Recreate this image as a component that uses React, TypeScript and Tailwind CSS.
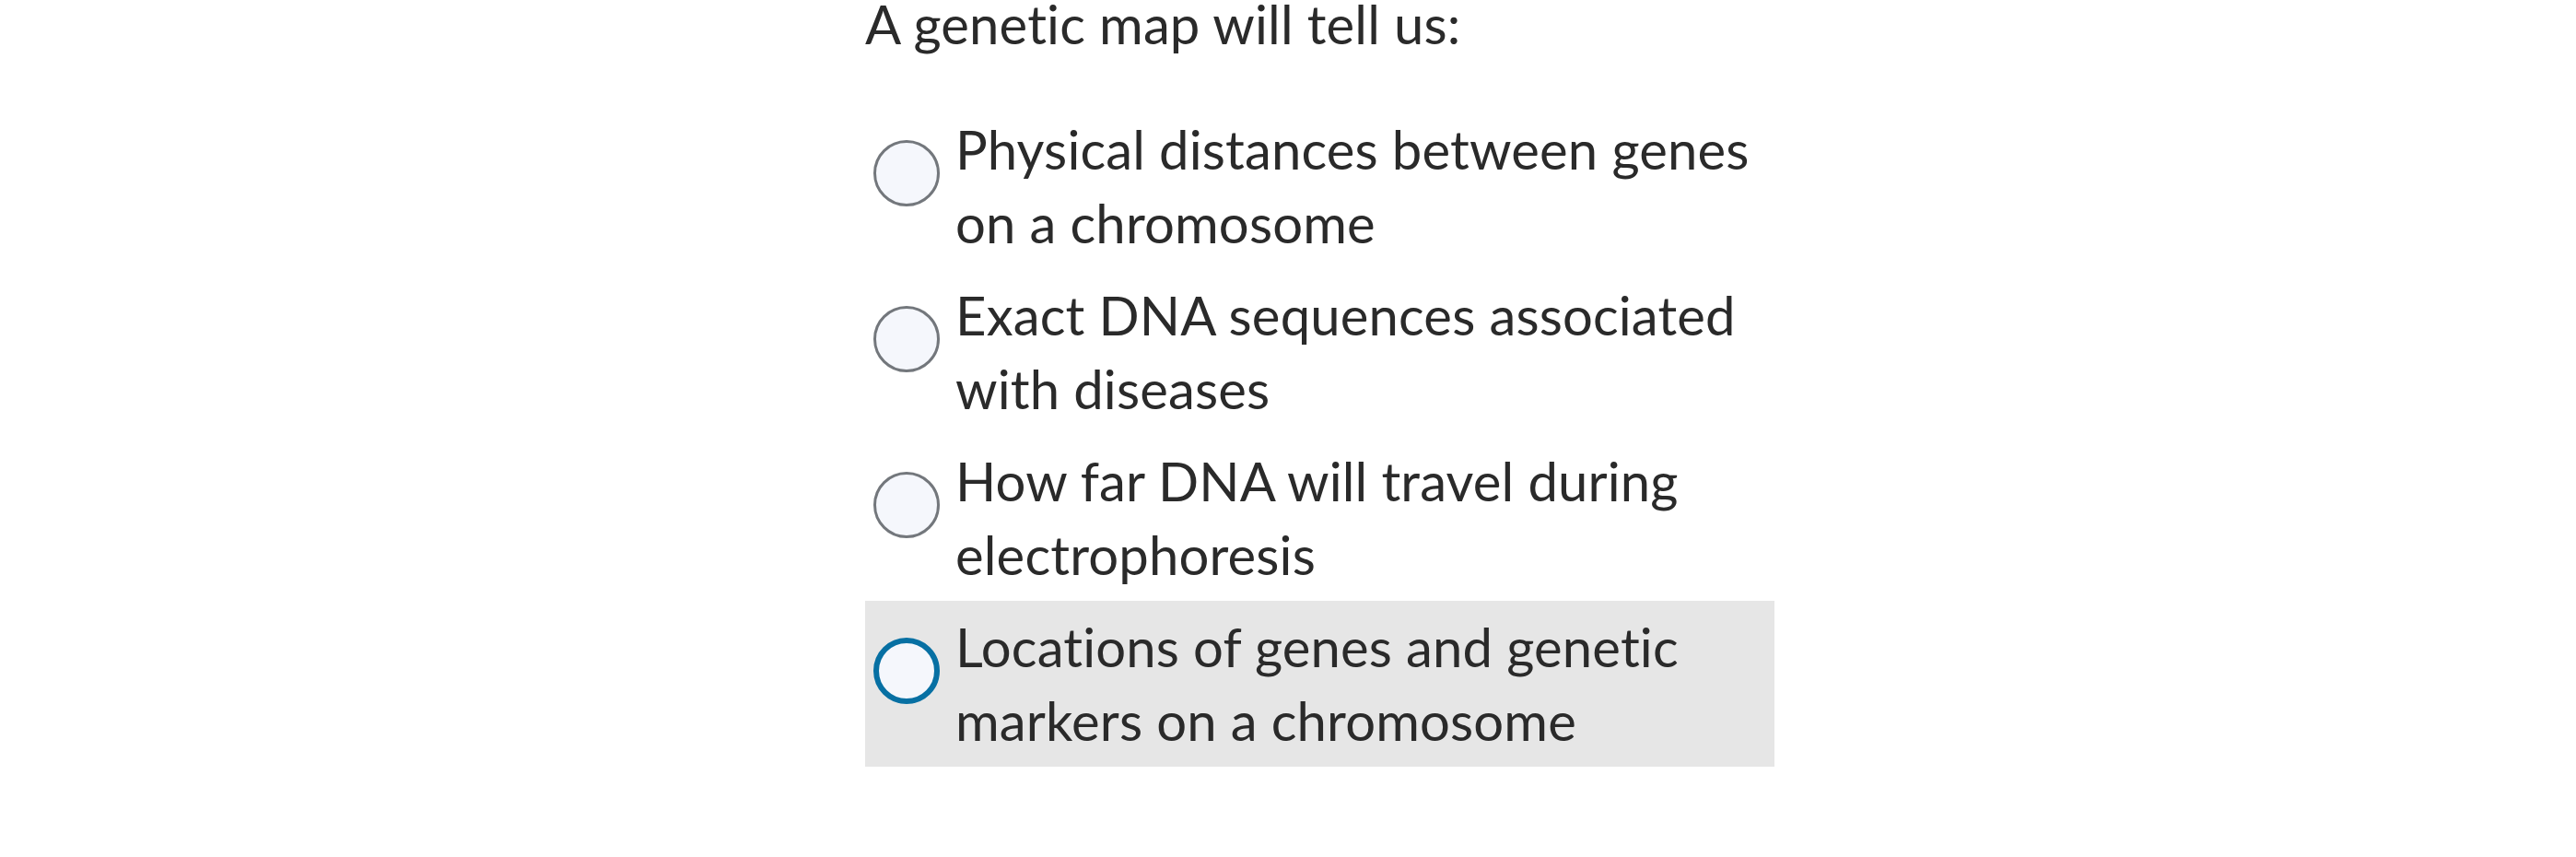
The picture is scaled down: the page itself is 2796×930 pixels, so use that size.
import React from "react";

const options = [
  { text: "Physical distances between genes on a chromosome", active: false },
  { text: "Exact DNA sequences associated with diseases", active: false },
  { text: "How far DNA will travel during electrophoresis", active: false },
  { text: "Locations of genes and genetic markers on a chromosome", active: true },
];

export default function App() {
  return (
    <div
      className="w-full h-[930px] bg-white overflow-hidden text-[#2a2a2a] tracking-[0.15px]"
      style={{ fontFamily: "Lato, 'Noto Sans', sans-serif", fontVariantLigatures: "none" }}
    >
      <div className="ml-[939px] w-[987px] pt-[4px]">
        <p className="text-[58px] leading-[44px] mb-[64px]">A genetic map will tell us:</p>
        <div className="flex flex-col">
          {options.map((o, i) => (
            <div
              key={i}
              className={`flex items-start h-[180px] pt-[10px] pl-[9px] pr-[10px] ${o.active ? "bg-[#e6e6e6]" : ""}`}
            >
              <div
                className={`shrink-0 mt-[30px] w-[72px] h-[72px] rounded-full bg-[#f5f7fc] ${
                  o.active ? "border-[6px] border-[#0770a3]" : "border-[3px] border-[#73777c]"
                }`}
              />
              <div className="ml-[17px] text-[58px] leading-[80px]">{o.text}</div>
            </div>
          ))}
        </div>
      </div>
    </div>
  );
}
